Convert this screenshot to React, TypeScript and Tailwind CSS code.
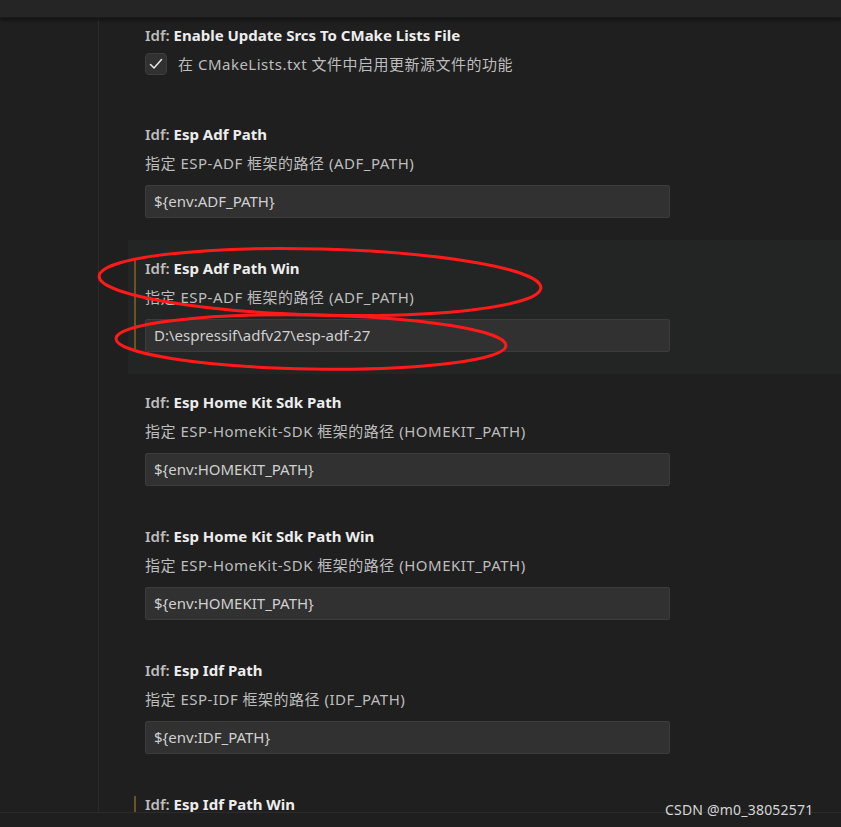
import React from 'react'

interface SettingItem {
    id: string;
    title: string;
    description?: string;
    value?: string;
    checkbox?: boolean;
    modified?: boolean;
    highlighted?: boolean;
}

const items: SettingItem[] = [
    {
        id: 'enableUpdateSrcs',
        title: 'Enable Update Srcs To CMake Lists File',
        description: '在 CMakeLists.txt 文件中启用更新源文件的功能',
        checkbox: true,
    },
    {
        id: 'espAdfPath',
        title: 'Esp Adf Path',
        description: '指定 ESP-ADF 框架的路径 (ADF_PATH)',
        value: '${env:ADF_PATH}',
    },
    {
        id: 'espAdfPathWin',
        title: 'Esp Adf Path Win',
        description: '指定 ESP-ADF 框架的路径 (ADF_PATH)',
        value: 'D:\\espressif\\adfv27\\esp-adf-27',
        modified: true,
        highlighted: true,
    },
    {
        id: 'espHomeKitSdkPath',
        title: 'Esp Home Kit Sdk Path',
        description: '指定 ESP-HomeKit-SDK 框架的路径 (HOMEKIT_PATH)',
        value: '${env:HOMEKIT_PATH}',
    },
    {
        id: 'espHomeKitSdkPathWin',
        title: 'Esp Home Kit Sdk Path Win',
        description: '指定 ESP-HomeKit-SDK 框架的路径 (HOMEKIT_PATH)',
        value: '${env:HOMEKIT_PATH}',
    },
    {
        id: 'espIdfPath',
        title: 'Esp Idf Path',
        description: '指定 ESP-IDF 框架的路径 (IDF_PATH)',
        value: '${env:IDF_PATH}',
    },
    {
        id: 'espIdfPathWin',
        title: 'Esp Idf Path Win',
        description: '指定 ESP-IDF 框架的路径 (IDF_PATH)',
        value: '${env:IDF_PATH}',
        modified: true,
    },
]

function Checkbox() {
    return (
        <div className="w-[22px] h-[22px] rounded-[4px] bg-[#313131] border border-[#3c3c3c] flex items-center justify-center shrink-0">
            <svg width="16" height="16" viewBox="0 0 16 16" fill="none">
                <path d="M2.5 8.5 L6 12 L13.5 3.5" stroke="#e8e8e8" strokeWidth="1.5" strokeLinecap="round" strokeLinejoin="round" />
            </svg>
        </div>
    )
}

function SettingRow({ item }: { item: SettingItem }) {
    return (
        <div className={`relative ml-[29px] pl-[17px] pt-[17px] ${item.checkbox ? 'pb-[31px]' : 'pb-[22px]'} ${item.highlighted ? 'bg-[#232424]' : ''}`}>
            {item.modified && (
                <div className="absolute left-[6px] top-[20px] bottom-[22px] w-[2px] bg-[#6b5323]" />
            )}
            <div className="h-[22px] leading-[22px] text-[15px] whitespace-nowrap">
                <span className="text-[#bdbdbd] font-semibold">Idf: </span>
                <span className="text-[#ededed] font-bold">{item.title}</span>
            </div>
            {item.checkbox ? (
                <div className="mt-[7px] h-[22px] flex items-center gap-[11px]">
                    <Checkbox />
                    <span className="text-[15px] tracking-[0.5px] text-[#bdbdbd] whitespace-nowrap">{item.description}</span>
                </div>
            ) : (
                <>
                    <div className="mt-[7px] h-[22px] leading-[22px] text-[15px] tracking-[0.5px] text-[#bdbdbd] whitespace-nowrap">{item.description}</div>
                    <div className="mt-[11px] w-[525px] h-[33px] bg-[#313131] border border-[#3c3c3c] rounded-[2px] flex items-center px-[8px] text-[15px] text-[#d0d0d0] whitespace-nowrap">
                        {item.value}
                    </div>
                </>
            )}
        </div>
    )
}

export default function App() {
    return (
        <div
            className="relative w-[841px] h-[827px] bg-[#1f1f1f] overflow-hidden flex flex-col"
            style={{ fontFamily: '"Noto Sans", "Noto Sans CJK SC", sans-serif' }}
        >
            <div className="h-[18px] shrink-0 bg-[#252525] border-b border-[#1a1a1a] shadow-[0_2px_4px_rgba(0,0,0,0.45)] z-10" />
            <div className="flex flex-1 min-h-0">
                <div className="w-[99px] shrink-0 border-r border-[#2b2b2b]" />
                <div className="flex-1 overflow-hidden">
                    <div className="-mt-[11px]">
                        {items.map(item => (
                            <SettingRow key={item.id} item={item} />
                        ))}
                    </div>
                </div>
            </div>
            <div className="h-[15px] shrink-0 border-t border-[#2b2b2b] bg-[#1f1f1f]" />

            <svg className="absolute inset-0 pointer-events-none" width="841" height="827" viewBox="0 0 841 827" fill="none">
                <ellipse cx="320" cy="282" rx="221" ry="33" transform="rotate(1.5 320 282)" stroke="#ff1a1a" strokeWidth="3" />
                <ellipse cx="311" cy="342" rx="195" ry="27" transform="rotate(1 311 342)" stroke="#ff1a1a" strokeWidth="3" />
            </svg>

            <div className="absolute left-[665px] top-[801px] text-[14px] leading-[18px] text-[#d6d6d6] whitespace-nowrap tracking-[0.2px]">
                CSDN @m0_38052571
            </div>
        </div>
    )
}
